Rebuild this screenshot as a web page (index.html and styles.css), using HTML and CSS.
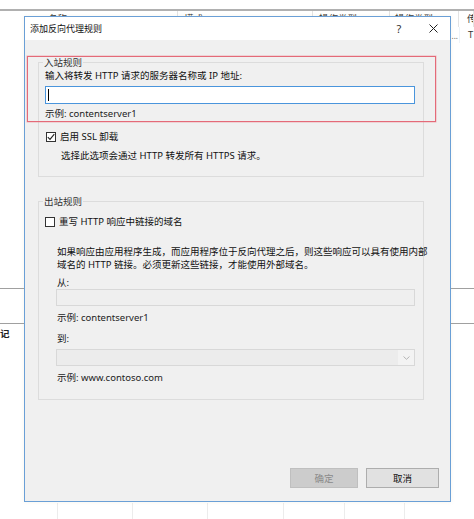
FILE: index.html
```html
<!DOCTYPE html>
<html lang="zh-CN">
<head>
<meta charset="utf-8">
<title>添加反向代理规则</title>
<link rel="stylesheet" href="styles.css">
</head>
<body>
<div class="bg">
  <div class="topline"></div>
  <div class="thead">
    <div class="th c1">名称</div>
    <div class="th c2">模式</div>
    <div class="th c3">操作类型</div>
    <div class="th c4">操作类型</div>
    <div class="th c5">传输</div>
  </div>
  <div class="trow">
    <div class="td c1"></div>
    <div class="td c2"></div>
    <div class="td c3"></div>
    <div class="td c4 ell">...</div>
    <div class="td c5">T</div>
  </div>
  <div class="spacer-a"></div>
  <div class="rule"></div>
  <div class="spacer-b"></div>
  <div class="rule"></div>
  <div class="side-text">记</div>
  <div class="spacer-c"></div>
  <div class="bcols">
    <div class="bc w57"></div>
    <div class="bc w75"></div>
    <div class="bc w75"></div>
    <div class="bc w76"></div>
    <div class="bc w61"></div>
    <div class="bc w60"></div>
    <div class="bc last"></div>
  </div>
</div>

<div class="dialog">
  <div class="titlebar">
    <span class="title">添加反向代理规则</span>
    <span class="help">?</span>
    <span class="close">
      <svg width="9" height="9" viewBox="0 0 9 9"><path d="M0.5 0.5 L8.5 8.5 M8.5 0.5 L0.5 8.5" stroke="#222" stroke-width="1" fill="none"/></svg>
    </span>
  </div>
  <div class="content">
    <fieldset class="group g1">
      <legend>入站规则</legend>
      <div class="line">输入将转发 HTTP 请求的服务器名称或 IP 地址:</div>
      <div class="textbox active"><span class="caret"></span></div>
      <div class="line ex1">示例: contentserver1</div>
      <div class="checkrow cr1">
        <span class="cbox"><svg width="8" height="8" viewBox="0 0 8 8"><path d="M0.8 4.2 L3 6.4 L7.3 1.2" stroke="#222" stroke-width="1.1" fill="none"/></svg></span>
        <span>启用 SSL 卸载</span>
      </div>
      <div class="line note">选择此选项会通过 HTTP 转发所有 HTTPS 请求。</div>
    </fieldset>

    <fieldset class="group g2">
      <legend>出站规则</legend>
      <div class="checkrow cr2">
        <span class="cbox"></span>
        <span>重写 HTTP 响应中链接的域名</span>
      </div>
      <div class="indent">
        <p class="para">如果响应由应用程序生成，而应用程序位于反向代理之后，则这些响应可以具有使用内部<br>域名的 HTTP 链接。必须更新这些链接，才能使用外部域名。</p>
        <div class="line from">从:</div>
        <div class="textbox disabled"></div>
        <div class="line ex2">示例: contentserver1</div>
        <div class="line to">到:</div>
        <div class="combo">
          <span class="combo-text"></span>
          <span class="combo-arrow"><svg width="7" height="4" viewBox="0 0 7 4"><path d="M0.5 0.5 L3.5 3.3 L6.5 0.5" stroke="#b4b4b4" stroke-width="1" fill="none"/></svg></span>
        </div>
        <div class="line ex3">示例: www.contoso.com</div>
      </div>
    </fieldset>

    <div class="buttons">
      <button class="btn ok" disabled>确定</button>
      <button class="btn cancel">取消</button>
    </div>
  </div>
  <div class="annot"></div>
</div>
</body>
</html>
```

FILE: styles.css
```css
html, body {
  margin: 0;
  padding: 0;
  background: #ffffff;
}
body {
  width: 474px;
  height: 519px;
  overflow: hidden;
  position: relative;
  font-family: "Noto Sans", "Noto Sans CJK SC", sans-serif;
  font-size: 9.5px;
  color: #111;
}

/* ---------- background window ---------- */
.bg {
  display: flex;
  flex-direction: column;
}
.topline {
  margin-top: 9px;
  height: 2px;
  background: #b0b0b0;
}
.thead, .trow {
  display: flex;
  height: 16px;
  line-height: 16px;
}
.th, .td {
  box-sizing: border-box;
  white-space: nowrap;
  overflow: hidden;
  color: #333;
}
.th { border-right: 1px solid #e3e3e3; }
.c1 { width: 178px; padding-left: 48px; }
.c2 { width: 135px; padding-left: 6px; }
.c3 { width: 77px; padding-left: 6px; }
.c4 { width: 69px; padding-left: 5px; }
.c5 { flex: 1; padding-left: 8px; }
.trow .c5 { padding-left: 8px; border-left: 1px solid #eef3f8; }
.ell {
  text-align: right;
  padding-right: 1px;
  color: #666;
  font-size: 8px;
  line-height: 18px;
}
.spacer-a { height: 245px; }
.rule { height: 1px; background: #a0a0a0; }
.spacer-b { height: 34px; }
.side-text {
  margin-top: 3px;
  margin-left: 0;
  line-height: 14px;
  height: 14px;
  font-weight: bold;
  color: #222;
}
.spacer-c { height: 162px; }
.bcols {
  display: flex;
  height: 16px;
}
.bc { box-sizing: border-box; border-right: 1px solid #ececec; }
.w57 { width: 58px; }
.w75 { width: 75px; }
.w76 { width: 76px; }
.w61 { width: 61px; }
.w60 { width: 60px; }
.bc.last { flex: 1; border-right: none; }

/* ---------- dialog ---------- */
.dialog {
  position: absolute;
  left: 24px;
  top: 16px;
  width: 427px;
  height: 486px;
  box-sizing: border-box;
  border: 1px solid #6a9fd6;
  background: #f0f0f0;
  display: flex;
  flex-direction: column;
  box-shadow: 0 0 4px rgba(200, 180, 120, 0.15);
}
.titlebar {
  height: 23px;
  background: #ffffff;
  display: flex;
  align-items: center;
  padding-left: 5px;
  flex-shrink: 0;
}
.title {
  font-family: "Noto Sans CJK SC", sans-serif;
  font-size: 9px;
  color: #111;
}
.help {
  margin-left: auto;
  width: 30px;
  text-align: center;
  font-size: 11px;
  color: #333;
}
.close {
  margin-left: 2px;
  width: 34px;
  display: flex;
  justify-content: center;
  align-items: center;
  height: 23px;
}

.content {
  flex: 1;
  display: flex;
  flex-direction: column;
  padding: 0 11px 13px 13px;
}

.group {
  box-sizing: border-box;
  width: 386px;
  margin: 0;
  border: 1px solid #dcdcdc;
  padding: 0 6px 14px 6px;
  min-width: 0;
}
.g1 { margin-top: 16px; }
.g2 { margin-top: 18px; padding-bottom: 15px; }
.group legend {
  padding: 0 1px;
  margin-left: -2px;
  line-height: 13px;
  font-family: "Noto Sans CJK SC", sans-serif;
  font-size: 9.5px;
  color: #333;
}

.line {
  line-height: 13px;
  height: 13px;
  white-space: nowrap;
}
.textbox {
  box-sizing: border-box;
  display: flex;
  align-items: center;
}
.textbox.active {
  margin-top: 4px;
  width: 370px;
  height: 18px;
  background: #ffffff;
  border: 1px solid #4a95dc;
  padding-left: 2px;
}
.caret {
  width: 1px;
  height: 12px;
  background: #000;
}
.ex1 { margin-top: 3px; color: #222; }
.checkrow {
  display: flex;
  align-items: center;
  gap: 4px;
  height: 13px;
  line-height: 13px;
}
.cr1 { margin-top: 10px; padding-left: 1px; }
.cr2 { margin-top: 7px; }
.cbox {
  box-sizing: border-box;
  width: 10px;
  height: 10px;
  border: 1px solid #333;
  background: #ffffff;
  display: flex;
  align-items: center;
  justify-content: center;
}
.note { margin-top: 6px; margin-left: 16px; }

.indent { margin-left: 12px; }
.para {
  margin: 17px 0 0 0;
  line-height: 13px;
  white-space: nowrap;
}
.from { margin-top: 5px; }
.textbox.disabled {
  margin-left: -1px;
  width: 359px;
  height: 17px;
  background: #efefef;
  border: 1px solid #d8d8d8;
}
.ex2 { margin-top: 5px; color: #222; }
.to { margin-top: 8px; }
.combo {
  margin-top: 4px;
  margin-left: -1px;
  width: 359px;
  height: 17px;
  box-sizing: border-box;
  border: 1px solid #d8d8d8;
  display: flex;
}
.combo-text {
  flex: 1;
  background: #ececec;
}
.combo-arrow {
  width: 16px;
  background: #f3f3f3;
  display: flex;
  align-items: center;
  justify-content: center;
}
.ex3 { margin-top: 5px; color: #222; }

.buttons {
  margin-top: auto;
  display: flex;
  justify-content: flex-end;
  gap: 8px;
}
.btn {
  box-sizing: border-box;
  height: 20px;
  margin: 0;
  padding: 0;
  font-family: "Noto Sans CJK SC", sans-serif;
  font-size: 9.5px;
  line-height: 18px;
}
.btn.ok {
  width: 68px;
  background: #cccccc;
  border: 1px solid #bfbfbf;
  color: #8a8a8a;
}
.btn.cancel {
  width: 73px;
  background: #e1e1e1;
  border: 1px solid #adadad;
  color: #111;
}

.annot {
  position: absolute;
  left: 2px;
  top: 39px;
  width: 409px;
  height: 66px;
  box-sizing: border-box;
  border: 1px solid #e46a78;
  box-shadow: 0 0 0 0.5px rgba(236, 140, 150, 0.6);
  pointer-events: none;
}
```
